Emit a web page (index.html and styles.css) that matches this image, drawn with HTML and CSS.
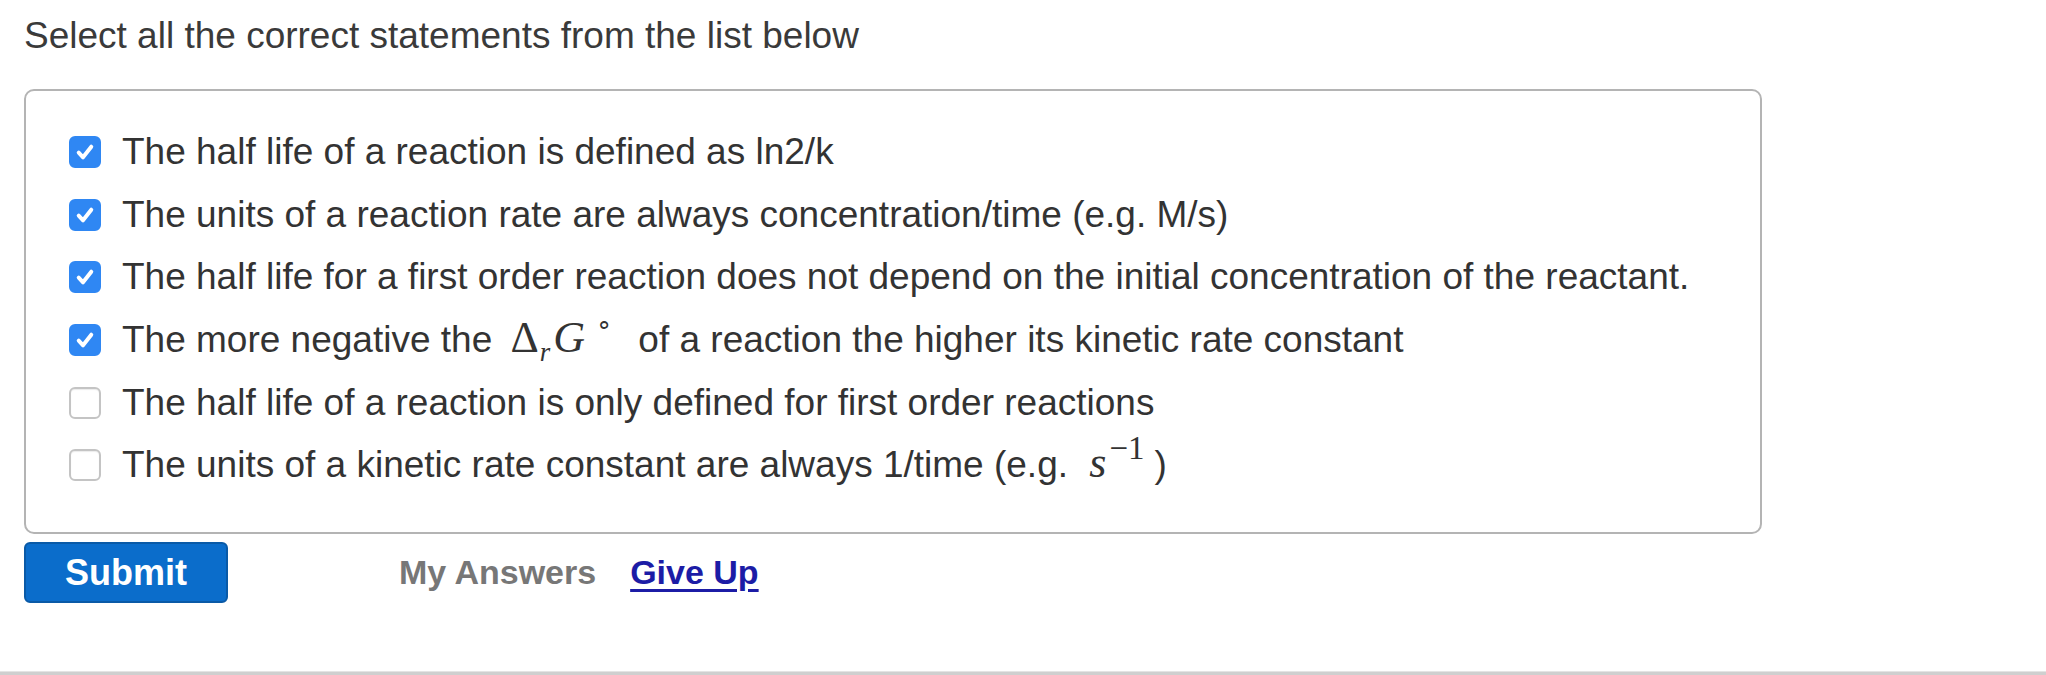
FILE: index.html
```html
<!DOCTYPE html>
<html lang="en">
<head>
<meta charset="utf-8">
<title>Question</title>
<link rel="stylesheet" href="styles.css">
</head>
<body>
<div class="page">
  <p class="prompt">Select all the correct statements from the list below</p>
  <div class="choices">
    <label class="choice"><span class="box checked"><svg viewBox="0 0 20 20"><path d="M5.5 10.5 L8.6 13.8 L14.5 6.2"/></svg></span><span class="txt">The half life of a reaction is defined as ln2/k</span></label>
    <label class="choice"><span class="box checked"><svg viewBox="0 0 20 20"><path d="M5.5 10.5 L8.6 13.8 L14.5 6.2"/></svg></span><span class="txt">The units of a reaction rate are always concentration/time (e.g. M/s)</span></label>
    <label class="choice"><span class="box checked"><svg viewBox="0 0 20 20"><path d="M5.5 10.5 L8.6 13.8 L14.5 6.2"/></svg></span><span class="txt">The half life for a first order reaction does not depend on the initial concentration of the reactant.</span></label>
    <label class="choice"><span class="box checked"><svg viewBox="0 0 20 20"><path d="M5.5 10.5 L8.6 13.8 L14.5 6.2"/></svg></span><span class="txt">The more negative the <span class="math">Δ<sub class="msub">r</sub><i class="mi">G</i><sup class="msup">∘</sup></span> of a reaction the higher its kinetic rate constant</span></label>
    <label class="choice"><span class="box"></span><span class="txt">The half life of a reaction is only defined for first order reactions</span></label>
    <label class="choice"><span class="box"></span><span class="txt">The units of a kinetic rate constant are always 1/time (e.g. <span class="math math-s"><i class="mi">s</i><sup class="mexp">−1</sup></span>)</span></label>
  </div>
  <div class="actions">
    <button class="submit" type="button">Submit</button>
    <span class="myans">My Answers</span>
    <a class="giveup" href="#">Give Up</a>
  </div>
</div>
<div class="footer-line"></div>
</body>
</html>
```
FILE: styles.css
```css
html, body {
  margin: 0;
  padding: 0;
  background: #ffffff;
}
body {
  font-family: "Liberation Sans", Arial, sans-serif;
  color: #333333;
  height: 675px;
  display: flex;
  flex-direction: column;
  overflow: hidden;
}
.page {
  flex: 1;
  padding: 15px 0 0 24px;
}
.prompt {
  margin: 0;
  font-size: 37px;
  line-height: 42px;
  color: #3a3a3a;
}
.choices {
  margin-top: 32px;
  border: 2px solid #b4b4b4;
  border-radius: 10px;
  display: flex;
  flex-direction: column;
  padding-top: 30px;
  box-sizing: border-box;
  height: 445px;
  width: 1738px;
}
.choice {
  display: flex;
  align-items: center;
  height: 62.6px;
  flex: none;
  padding-left: 43px;
  font-size: 37px;
  line-height: 40px;
  color: #333333;
}
.box {
  width: 28px;
  height: 28px;
  border-radius: 6px;
  border: 2px solid #c4c4c4;
  background: #ffffff;
  box-sizing: content-box;
  flex: none;
  display: flex;
  align-items: center;
  justify-content: center;
  box-shadow: inset 0 1px 1px rgba(0,0,0,0.08);
}
.box.checked {
  background: #2f87f3;
  border-color: #2f87f3;
  box-shadow: none;
}
.box svg {
  width: 28px;
  height: 28px;
}
.box svg path {
  fill: none;
  stroke: #ffffff;
  stroke-width: 2.8;
  stroke-linecap: round;
  stroke-linejoin: round;
}
.txt {
  margin-left: 21px;
  white-space: nowrap;
  line-height: 40px;
}
.math {
  font-family: "Liberation Serif", "Times New Roman", serif;
  font-size: 44px;
  line-height: 0;
  color: #333333;
  padding: 0 16px 0 8px;
}
.math-s {
  padding: 0 6px 0 11px;
}
.mi {
  font-style: italic;
}
.msub {
  font-style: italic;
  font-size: 27px;
  line-height: 0;
  vertical-align: -9px;
  margin-left: 1px;
  margin-right: 3px;
}
.msup {
  font-size: 26px;
  line-height: 0;
  vertical-align: 19px;
  margin-left: 11px;
}
.mexp {
  font-size: 33px;
  line-height: 0;
  vertical-align: 18px;
  margin-left: 3px;
  margin-right: 4px;
}
.actions {
  display: flex;
  align-items: center;
  margin-top: 8px;
}
.submit {
  width: 204px;
  height: 61px;
  background: #0b6dcb;
  border: 2px solid #0a5aa7;
  border-radius: 6px;
  color: #ffffff;
  font-family: "Liberation Sans", Arial, sans-serif;
  font-weight: bold;
  font-size: 36px;
  padding: 0;
  cursor: pointer;
}
.myans {
  margin-left: 171px;
  font-weight: bold;
  font-size: 34px;
  color: #777777;
}
.giveup {
  margin-left: 34px;
  font-weight: bold;
  font-size: 34px;
  color: #1c1ca6;
  text-decoration: underline;
  text-underline-offset: 5px;
  text-decoration-thickness: 3px;
}
.footer-line {
  height: 3px;
  background: #cfcfcf;
  border-top: 1px solid #e4e4e4;
  flex: none;
}
```
